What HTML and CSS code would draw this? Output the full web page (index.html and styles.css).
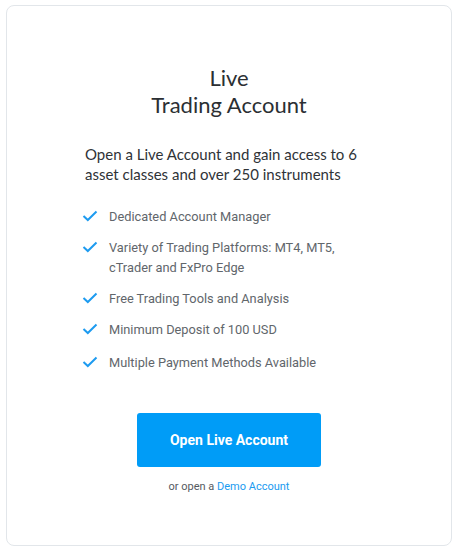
FILE: index.html
```html
<!DOCTYPE html>
<html>
<head>
<meta charset="utf-8">
<link rel="stylesheet" href="styles.css">
</head>
<body>
<div class="card">
  <h1 class="title">Live<br>Trading Account</h1>
  <p class="lead">Open a Live Account and gain access to 6 asset classes and over 250 instruments</p>
  <ul class="features">
    <li><svg class="check" viewBox="0 0 16 12" width="16" height="12"><path d="M1.5 6 L5.8 10 L14.5 1.5" fill="none" stroke="#1d9bf0" stroke-width="2"/></svg><span>Dedicated Account Manager</span></li>
    <li><svg class="check" viewBox="0 0 16 12" width="16" height="12"><path d="M1.5 6 L5.8 10 L14.5 1.5" fill="none" stroke="#1d9bf0" stroke-width="2"/></svg><span>Variety of Trading Platforms: MT4, MT5, cTrader and FxPro Edge</span></li>
    <li><svg class="check" viewBox="0 0 16 12" width="16" height="12"><path d="M1.5 6 L5.8 10 L14.5 1.5" fill="none" stroke="#1d9bf0" stroke-width="2"/></svg><span>Free Trading Tools and Analysis</span></li>
    <li><svg class="check" viewBox="0 0 16 12" width="16" height="12"><path d="M1.5 6 L5.8 10 L14.5 1.5" fill="none" stroke="#1d9bf0" stroke-width="2"/></svg><span>Minimum Deposit of 100 USD</span></li>
    <li><svg class="check" viewBox="0 0 16 12" width="16" height="12"><path d="M1.5 6 L5.8 10 L14.5 1.5" fill="none" stroke="#1d9bf0" stroke-width="2"/></svg><span>Multiple Payment Methods Available</span></li>
  </ul>
  <div class="actions">
    <a class="btn">Open Live Account</a>
    <p class="alt">or open a <a class="link">Demo Account</a></p>
  </div>
</div>
</body>
</html>
```
FILE: styles.css
```css
html, body { margin: 0; padding: 0; background: #fff; }
body { padding: 5px 2px 3px 6px; }
.card {
  box-sizing: border-box;
  width: 446px;
  height: 541px;
  border: 1px solid #e2e6ea;
  border-radius: 8px;
  background: #fff;
  padding: 58px 0 0 0;
  font-family: Roboto, "Liberation Sans", sans-serif;
}
.title {
  margin: 0;
  text-align: center;
  font-family: "Lato", "Open Sans", sans-serif;
  font-weight: 400;
  font-size: 22px;
  line-height: 27px;
  color: #2b2f33;
}
.lead {
  margin: 26px 0 0 78px;
  width: 290px;
  font-family: "Lato", "Open Sans", sans-serif;
  font-size: 15px;
  line-height: 20px;
  color: #2f3337;
}
.features {
  list-style: none;
  margin: 23px 0 0 75px;
  padding: 0;
  display: flex;
  flex-direction: column;
  gap: 11px;
}
.features li {
  display: flex;
  align-items: flex-start;
  gap: 11px;
  font-size: 12.8px;
  line-height: 20px;
  color: #61666b;
  width: 270px;
}
.features li:last-child { margin-top: 2px; }
.check { flex: none; margin-top: 3px; }
.actions {
  display: flex;
  flex-direction: column;
  align-items: center;
  margin-top: 40px;
}
.btn {
  display: flex;
  align-items: center;
  justify-content: center;
  width: 184px;
  height: 54px;
  background: #009cf7;
  border-radius: 3px;
  color: #fff;
  font-weight: 700;
  font-size: 14px;
}
.alt {
  margin: 13px 0 0 0;
  font-size: 11px;
  line-height: 14px;
  color: #555a5f;
}
.link { color: #1a9bf0; }
```
